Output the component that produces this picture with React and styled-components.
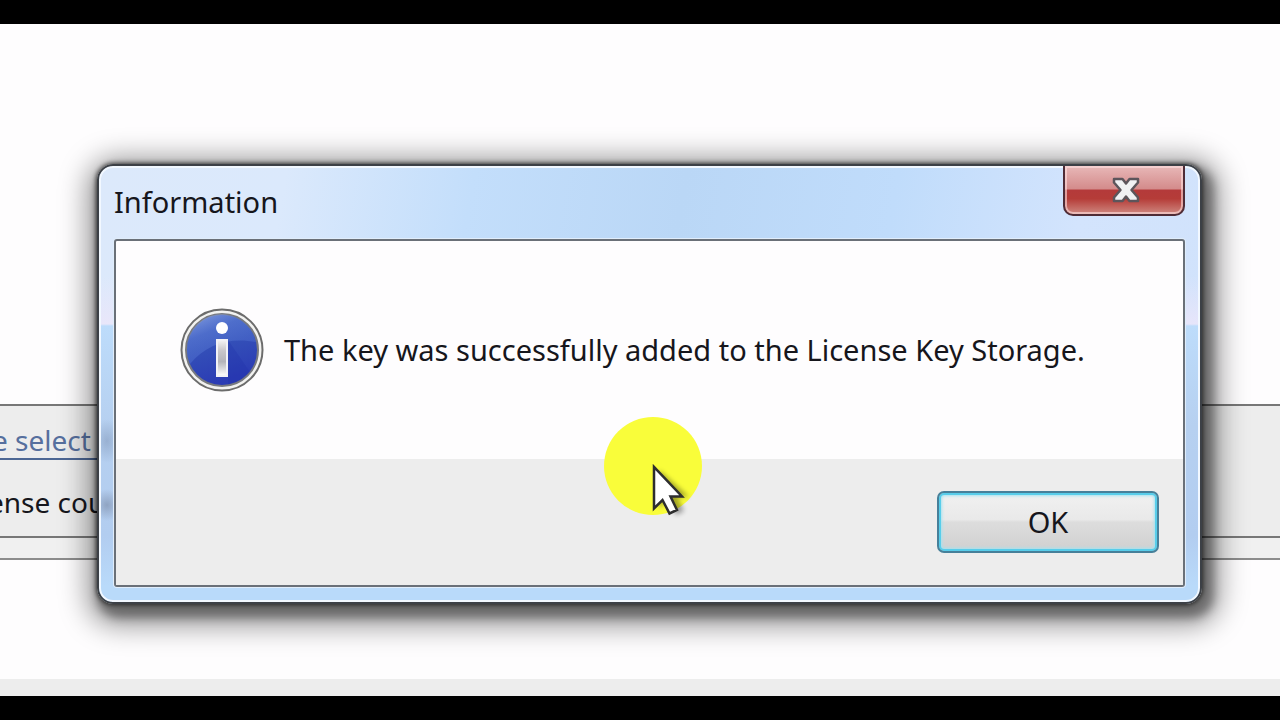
import React, { useState } from "react";
import styled, { createGlobalStyle } from "styled-components";

const App = () => {
  const [open, setOpen] = useState(true);

  const close = () => setOpen(false);

  return (
    <Screen>
      <GlobalStyle />
      <Desktop>
        <BlankArea />
        <LicensePanel>
          <SelectLink href="#select">e select</SelectLink>
          <CountLabel>ense cou</CountLabel>
        </LicensePanel>
        <Divider />
        <EmptyList />
        <StatusBar />
      </Desktop>
      {open && (
        <Overlay>
          <Dialog role="alertdialog" aria-labelledby="dialog-title" aria-describedby="dialog-message">
            <TitleBar>
              <Title id="dialog-title">Information</Title>
              <CloseButton aria-label="Close" onClick={close}>
                <CloseIcon />
              </CloseButton>
            </TitleBar>
            <Client>
              <Message>
                <InfoIcon />
                <MessageText id="dialog-message">
                  The key was successfully added to the License Key Storage.
                </MessageText>
              </Message>
              <Footer>
                <OkButton onClick={close}>OK</OkButton>
              </Footer>
            </Client>
          </Dialog>
        </Overlay>
      )}
      <Pointer />
    </Screen>
  );
};

const CloseIcon = () => (
  <svg width="28" height="26" viewBox="0 0 28 26" aria-hidden="true">
    <path
      d="M2 2h8.500l3.500 4.500L17.500 2H26v3.500L19.500 13l6.500 7.500V24h-8.500L14 19.500 10.500 24H2v-3.500L8.500 13 2 5.500z"
      fill="#f0f1f3"
      stroke="#5c555b"
      strokeWidth="2.500"
      strokeLinejoin="round"
    />
  </svg>
);

const InfoIcon = () => (
  <svg width="84" height="84" viewBox="0 0 84 84" aria-hidden="true">
    <defs>
      <linearGradient id="ball" x1="0" y1="0" x2="0.300" y2="1">
        <stop offset="0" stopColor="#4a6bc8" />
        <stop offset="0.500" stopColor="#3450b8" />
        <stop offset="1" stopColor="#2b3cb4" />
      </linearGradient>
      <linearGradient id="gloss" x1="0" y1="0" x2="0.600" y2="1">
        <stop offset="0" stopColor="#a9bcec" stopOpacity="0.700" />
        <stop offset="0.400" stopColor="#5f80d8" stopOpacity="0.500" />
        <stop offset="1" stopColor="#5577d6" stopOpacity="0.300" />
      </linearGradient>
      <linearGradient id="stem" x1="0" y1="0" x2="0" y2="1">
        <stop offset="0" stopColor="#f4f4f4" />
        <stop offset="0.300" stopColor="#c8c6ca" />
        <stop offset="0.600" stopColor="#b4b4ba" />
        <stop offset="1" stopColor="#fff" />
      </linearGradient>
    </defs>
    <circle cx="42" cy="42" r="40.500" fill="#f2f2f0" stroke="#6c6c6c" strokeWidth="2" />
    <circle cx="42" cy="42" r="36" fill="url(#ball)" stroke="#77797f" strokeWidth="2" />
    <path d="M10 56A35 35 0 1 1 76 34C50 29 26 36 10 56z" fill="url(#gloss)" />
    <path d="M48 32l22 32a35 35 0 0 1-22 12z" fill="#1c2aa6" opacity="0.250" />
    <circle cx="42" cy="20" r="6" fill="#fff" />
    <rect x="37" y="32" width="10" height="36" fill="url(#stem)" stroke="#f2f2f6" strokeWidth="2" />
  </svg>
);

const Pointer = () => (
  <PointerSpot>
    <svg width="100" height="112" viewBox="0 0 100 112" aria-hidden="true">
      <defs>
        <filter id="soft" x="-30%" y="-30%" width="160%" height="160%">
          <feGaussianBlur stdDeviation="2.500" />
        </filter>
      </defs>
      <circle cx="50" cy="50" r="49" fill="#f9fd3a" />
      <path
        d="M56 54v38l9-8 8 15 8-4-7-14h12z"
        fill="#000"
        opacity="0.350"
        filter="url(#soft)"
      />
      <path
        d="M51 51v41.500l8.500-8.500 7 13.500 7.500-3.500-6.500-13.500h11.500z"
        fill="#fff"
        stroke="#2e2e2e"
        strokeWidth="2.500"
      />
    </svg>
  </PointerSpot>
);

const GlobalStyle = createGlobalStyle`
  * {
    box-sizing: border-box;
  }

  body {
    margin: 0;
    background: #000;
    font-family: "Noto Sans", "Open Sans", sans-serif;
    font-size: 29px;
    line-height: 40px;
    color: #16161c;
  }
`;

const Screen = styled.main`
  position: relative;
  display: flex;
  flex-direction: column;
  min-height: 100vh;
  padding: 24px 0;
  overflow: hidden;
`;

const Desktop = styled.div`
  display: flex;
  flex: 1;
  flex-direction: column;
  background: #fefdfe;
`;

const BlankArea = styled.div`
  height: 380px;
`;

const LicensePanel = styled.section`
  display: flex;
  flex-direction: column;
  align-items: flex-start;
  gap: 24px;
  height: 134px;
  padding-top: 16px;
  border-top: 2px solid #777;
  border-bottom: 2px solid #777;
  background: #ededed;
  font-size: 28px;
  line-height: 36px;
  white-space: nowrap;
`;

const SelectLink = styled.a`
  margin-left: -8px;
  padding-right: 8px;
  border-bottom: 2px solid #4d6794;
  color: #566f9e;
  text-decoration: none;
`;

const CountLabel = styled.span`
  margin-left: -12px;
`;

const Divider = styled.div`
  height: 22px;
  border-bottom: 2px solid #8c8c8c;
  background: #f0f0f0;
`;

const EmptyList = styled.div`
  flex: 1;
`;

const StatusBar = styled.footer`
  height: 17px;
  background: #ededed;
`;

const Overlay = styled.div`
  position: absolute;
  inset: 0;
  padding: 164px 78px 0 97px;
`;

/* glass frame: lighter top half, then a hard step to a deeper blue */
const Dialog = styled.section`
  padding: 0 15px 15px;
  border: 2px solid #3c4046;
  border-radius: 16px;
  background:
    radial-gradient(14px 22px at 8px 275px, rgba(110, 130, 165, 0.400), transparent),
    radial-gradient(14px 16px at 8px 339px, rgba(90, 100, 125, 0.400), transparent),
    linear-gradient(
      transparent 110px,
      rgba(236, 230, 250, 0.800) 158px,
      #bddcfb 160px,
      #b6d0f0 260px,
      #b2cdf0 370px,
      #b9dafa 420px
    ),
    linear-gradient(
      100deg,
      #dce9fb 0%,
      #dbe9fc 16%,
      #c3defb 32%,
      #bad7f6 50%,
      #c0dcfb 68%,
      #d3e4fd 84%,
      #d0e2fb 100%
    );
  box-shadow:
    inset 0 0 0 2px #f2f8ff,
    0 0 4px 1px rgba(0, 0, 0, 0.600),
    6px 8px 10px 6px rgba(0, 0, 0, 0.350),
    4px 8px 28px 14px rgba(0, 0, 0, 0.400);
`;

const TitleBar = styled.header`
  display: flex;
  align-items: flex-start;
  justify-content: space-between;
  height: 73px;
`;

const Title = styled.h1`
  margin: 0;
  padding-top: 16px;
  font-size: 29px;
  font-weight: 400;
  line-height: 40px;
`;

const CloseButton = styled.button`
  display: flex;
  align-items: center;
  justify-content: center;
  width: 122px;
  height: 50px;
  padding: 0 0 0 4px;
  border: 2px solid #4f2c36;
  border-top: 0;
  border-radius: 0 0 10px 10px;
  background: linear-gradient(#e8b8b8 0%, #d48c8c 47%, #b43a3a 51%, #b53c38 68%, #cf8880 100%);
  box-shadow: inset 0 0 0 2px rgba(255, 225, 225, 0.600);
`;

const Client = styled.div`
  border: 2px solid #6a7078;
  border-radius: 3px;
  background: #fefdfe;
  box-shadow: 0 0 0 1px #e0edfb;
`;

const Message = styled.div`
  display: flex;
  align-items: center;
  gap: 20px;
  height: 218px;
  padding: 0 64px;
`;

const MessageText = styled.p`
  margin: 0;
  white-space: nowrap;
`;

const Footer = styled.footer`
  display: flex;
  justify-content: flex-end;
  padding: 32px 24px;
  background: #ededed;
`;

const OkButton = styled.button`
  width: 222px;
  height: 62px;
  border: 2px solid #47809a;
  border-radius: 7px;
  background: linear-gradient(#f1f1f1 0%, #e9e9e9 46%, #dddddd 50%, #d0d0d0 100%);
  box-shadow: inset 0 0 0 2px #58cdea, inset 0 0 3px 3px #a5e2f0;
  color: inherit;
  font: inherit;
`;

const PointerSpot = styled.div`
  position: absolute;
  top: 416px;
  left: 603px;
  line-height: 0;
  pointer-events: none;
`;

export default App;
